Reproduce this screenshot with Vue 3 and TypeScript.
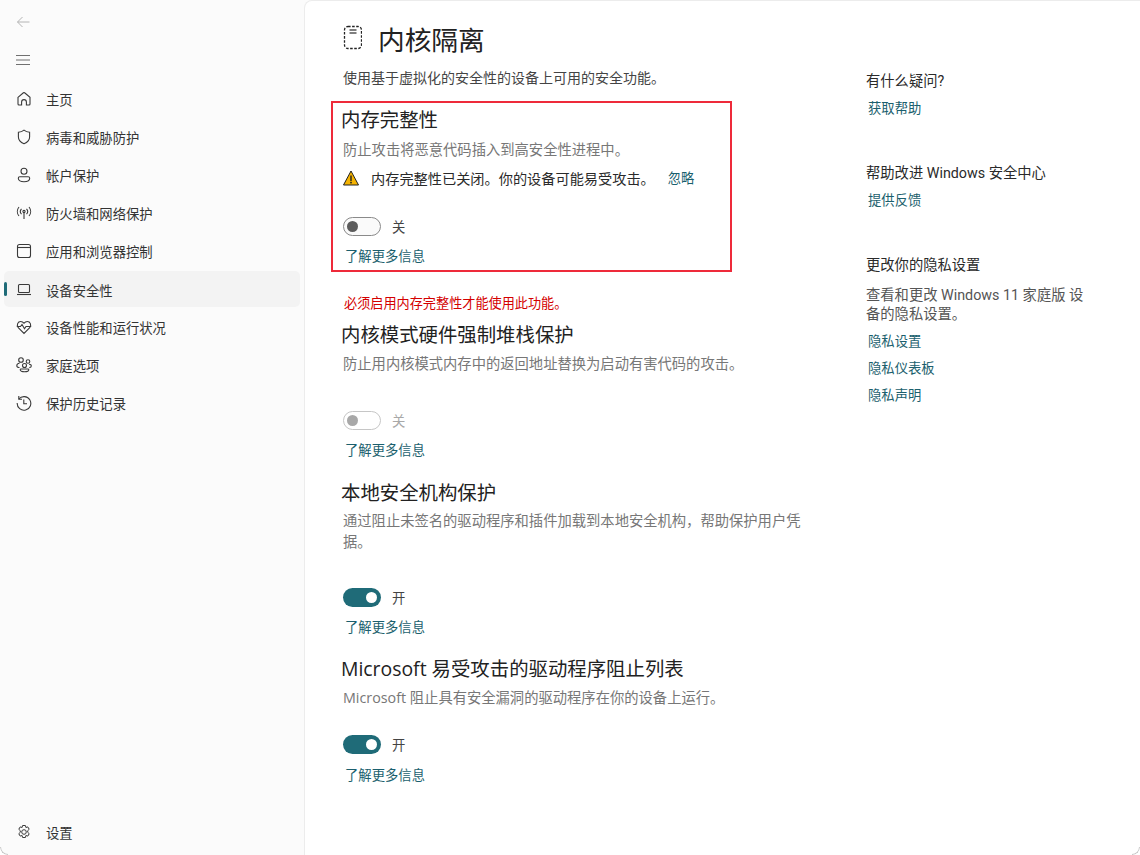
<script setup lang="ts">
interface NavItem { label: string; icon: string; active?: boolean }
const nav: NavItem[] = [
  { label: '主页', icon: 'home' },
  { label: '病毒和威胁防护', icon: 'shield' },
  { label: '帐户保护', icon: 'person' },
  { label: '防火墙和网络保护', icon: 'wifi' },
  { label: '应用和浏览器控制', icon: 'window' },
  { label: '设备安全性', icon: 'laptop', active: true },
  { label: '设备性能和运行状况', icon: 'heart' },
  { label: '家庭选项', icon: 'family' },
  { label: '保护历史记录', icon: 'history' },
]
</script>

<template>
  <div class="app">
    <aside class="side">
      <div class="top-icon back">
        <svg width="16" height="16" viewBox="0 0 16 16" fill="none" stroke="#b4b4b4" stroke-width="1"><path d="M13.500 8H1.500M6.500 3L1.500 8l5 5" /></svg>
      </div>
      <div class="top-icon menu">
        <svg width="16" height="16" viewBox="0 0 16 16" fill="none" stroke="#707070" stroke-width="1"><path d="M0 3.500h14M0 8h14M0 12.500h14" /></svg>
      </div>
      <nav class="nav">
        <div v-for="item in nav" :key="item.label" class="nav-item" :class="{ active: item.active }">
          <span v-if="item.active" class="pill"></span>
          <svg class="nav-icon" width="16" height="16" viewBox="0 0 16 16" fill="none" stroke="#3a3a3a" stroke-width="1.100">
            <template v-if="item.icon === 'home'">
              <path d="M2 6.300L7.400 1.800a1 1 0 0 1 1.200 0L14 6.300V13a1 1 0 0 1-1 1h-2.600v-3a2.400 2.400 0 0 0-4.800 0v3H3a1 1 0 0 1-1-1z" />
            </template>
            <template v-else-if="item.icon === 'shield'">
              <path d="M8 1.200c1.700 1.400 3.500 2 5.600 2.100V8c0 3.200-2 5.300-5.600 6.700C4.400 13.300 2.400 11.200 2.400 8V3.300C4.500 3.200 6.300 2.600 8 1.200z" />
            </template>
            <template v-else-if="item.icon === 'person'">
              <circle cx="8" cy="4.200" r="3" />
              <path d="M3.800 9.800h8.400A1.500 1.500 0 0 1 13.700 11.300c0 2.300-2.400 3.400-5.700 3.400s-5.700-1.100-5.700-3.400a1.500 1.500 0 0 1 1.500-1.500z" />
            </template>
            <template v-else-if="item.icon === 'wifi'">
              <circle cx="8" cy="6.500" r="1.100" />
              <path d="M8 7.600v6.400M5.500 3.800a4 4 0 0 0 0 5.400M10.500 3.800a4 4 0 0 1 0 5.400M3 2a7 7 0 0 0 0 9M13 2a7 7 0 0 1 0 9" />
            </template>
            <template v-else-if="item.icon === 'window'">
              <rect x="1.500" y="1.500" width="13" height="13" rx="2" />
              <path d="M1.500 4.500h13" />
            </template>
            <template v-else-if="item.icon === 'laptop'">
              <rect x="2.500" y="3.500" width="11" height="8" rx="1" />
              <path d="M1 13.500h14" />
            </template>
            <template v-else-if="item.icon === 'heart'">
              <path d="M3 9.500L2.300 8.600C.2 6.200 1.800 2.500 4.700 2.500 6 2.500 7.200 3.200 8 4.300c.8-1.100 2-1.800 3.300-1.800 2.900 0 4.500 3.700 2.400 6.100l-.7.9L8 14.500z" />
              <path d="M.8 7.500h3.700L6 5.500 8.500 9.800 10 7.500h5.200" />
            </template>
            <template v-else-if="item.icon === 'family'">
              <circle cx="5" cy="3" r="2.300" />
              <circle cx="12" cy="4.500" r="1.800" />
              <circle cx="8.500" cy="8.500" r="2" />
              <path d="M3.500 6.200C1.800 6.400.8 7.400.8 8.700c0 1 .9 1.800 2.700 1.800M13 7.200c1.500 0 2.300.7 2.300 1.800 0 1-.7 1.600-2 1.600" />
              <path d="M5 12h7a.8.8 0 0 1 .8.8c0 1.200-1.800 2-4.300 2s-4.300-.8-4.300-2A.8.8 0 0 1 5 12z" />
            </template>
            <template v-else-if="item.icon === 'history'">
              <path d="M2.800 4A6.800 6.800 0 1 1 1.200 8" />
              <path d="M2.800 1v3.200H6M7.800 4.500V8.800H11" />
            </template>
          </svg>
          <span class="nav-label">{{ item.label }}</span>
        </div>
      </nav>
      <div class="settings">
        <svg class="nav-icon" width="16" height="16" viewBox="0 0 16 16" fill="none" stroke="#3a3a3a" stroke-width="1">
          <circle cx="8" cy="8" r="2.300" />
          <path d="M6.600 1.500h2.800l.5 2 1.900-.6 1.400 2.400-1.500 1.400v1.600l1.500 1.400-1.400 2.400-1.900-.6-.5 2H6.600l-.5-2-1.900.6-1.400-2.400 1.500-1.400V6.700L2.800 5.300l1.400-2.400 1.900.6z" />
        </svg>
        <span class="nav-label">设置</span>
      </div>
    </aside>

    <main class="panel">
      <section class="content">
        <header class="title-row">
          <svg class="title-icon" width="20" height="26" viewBox="0 0 20 26" fill="none" stroke="#222" stroke-width="1.300">
            <rect x="2.500" y="1.500" width="17" height="22" rx="3.500" stroke-dasharray="2.600 1.500" />
            <path d="M7.500 5h7M7.500 8h7" stroke="#555" />
          </svg>
          <h1 class="title">内核隔离</h1>
        </header>
        <p class="subtitle">使用基于虚拟化的安全性的设备上可用的安全功能。</p>

        <div class="block boxed">
          <h2>内存完整性</h2>
          <p class="desc">防止攻击将恶意代码插入到高安全性进程中。</p>
          <div class="warn">
            <svg width="16" height="16" viewBox="0 0 16 16">
              <path d="M8 1L15.500 15H.5z" fill="#f5b301" stroke="#222" stroke-width="1" />
              <path d="M8 5.500v5.500" stroke="#222" stroke-width="1.400" />
              <rect x="7.200" y="11.800" width="1.600" height="1.600" fill="#222" />
            </svg>
            <span class="warn-text">内存完整性已关闭。你的设备可能易受攻击。</span>
            <a class="link ignore">忽略</a>
          </div>
          <div class="toggle-row first">
            <span class="toggle off"><i></i></span><span class="state">关</span>
          </div>
          <a class="link more">了解更多信息</a>
        </div>

        <p class="err">必须启用内存完整性才能使用此功能。</p>

        <div class="block stack">
          <h2>内核模式硬件强制堆栈保护</h2>
          <p class="desc">防止用内核模式内存中的返回地址替换为启动有害代码的攻击。</p>
          <div class="toggle-row disabled">
            <span class="toggle off"><i></i></span><span class="state">关</span>
          </div>
          <a class="link more">了解更多信息</a>
        </div>

        <div class="block lsa">
          <h2>本地安全机构保护</h2>
          <p class="desc wrap">通过阻止未签名的驱动程序和插件加载到本地安全机构，帮助保护用户凭据。</p>
          <div class="toggle-row">
            <span class="toggle on"><i></i></span><span class="state">开</span>
          </div>
          <a class="link more">了解更多信息</a>
        </div>

        <div class="block driver">
          <h2>Microsoft 易受攻击的驱动程序阻止列表</h2>
          <p class="desc">Microsoft 阻止具有安全漏洞的驱动程序在你的设备上运行。</p>
          <div class="toggle-row">
            <span class="toggle on"><i></i></span><span class="state">开</span>
          </div>
          <a class="link more">了解更多信息</a>
        </div>
      </section>

      <aside class="help">
        <div class="help-group">
          <h3>有什么疑问?</h3>
          <a class="link">获取帮助</a>
        </div>
        <div class="help-group">
          <h3>帮助改进 Windows 安全中心</h3>
          <a class="link">提供反馈</a>
        </div>
        <div class="help-group">
          <h3>更改你的隐私设置</h3>
          <p class="help-text">查看和更改 Windows 11 家庭版 设备的隐私设置。</p>
          <a class="link">隐私设置</a>
          <a class="link">隐私仪表板</a>
          <a class="link">隐私声明</a>
        </div>
      </aside>
    </main>
    <span class="corner left"></span>
    <span class="corner right"></span>
  </div>
</template>

<style>
html, body { margin: 0; padding: 0; background: #fff; }
</style>

<style scoped>
.app {
  position: relative;
  width: 1140px;
  height: 855px;
  display: flex;
  overflow: hidden;
  background: #fbfbfb;
  color: #1f1f1f;
  font-family: "Open Sans", "Noto Sans CJK SC", sans-serif;
  font-size: 13.33px;
  border-radius: 0 0 8px 8px;
}
.corner {
  position: absolute;
  bottom: 0;
  width: 8px;
  height: 8px;
  box-sizing: border-box;
  border-bottom: 1px solid #c4c4c4;
}
.corner.left { left: 0; border-left: 1px solid #c4c4c4; border-bottom-left-radius: 8px; }
.corner.right { right: 0; border-right: 1px solid #c4c4c4; border-bottom-right-radius: 8px; }
.side {
  width: 304px;
  flex: none;
  display: flex;
  flex-direction: column;
  padding-left: 4px;
  box-sizing: border-box;
}
.top-icon { height: 38px; display: flex; align-items: center; padding-left: 12px; }
.back { margin-top: 3px; }
.nav { margin-top: 2px; display: flex; flex-direction: column; gap: 2px; }
.nav-item {
  position: relative;
  width: 296px;
  height: 36px;
  display: flex;
  align-items: center;
  border-radius: 5px;
}
.nav-item.active { background: #f3f3f3; }
.nav-item.active .nav-label { margin-top: 2px; }
.pill {
  position: absolute;
  left: 0;
  top: 11px;
  width: 3px;
  height: 14px;
  border-radius: 2px;
  background: #1f6b78;
}
.nav-icon { margin-left: 12px; flex: none; }
.nav-label { margin-left: 14px; color: #333; }
.settings { margin-top: auto; height: 44px; display: flex; align-items: center; margin-bottom: 1px; }

.panel {
  flex: 1;
  background: #fff;
  border-left: 1px solid #ececec;
  border-top: 1px solid #ececec;
  border-top-left-radius: 8px;
  display: flex;
  min-width: 0;
}
.content { width: 523px; margin-left: 26px; flex: none; }
.title-row { display: flex; align-items: flex-start; height: 40px; margin-top: 19px; margin-left: 11px; }
.title-icon { flex: none; margin-top: 5px; }
.title { margin: 0 0 0 16px; font-size: 26.7px; font-weight: 400; line-height: 40px; color: #222; }
.subtitle { margin: 8px 0 0 12px; font-size: 14px; line-height: 20px; color: #444; }

.block h2 { margin: 0 0 0 -1px; font-size: 19.4px; font-weight: 400; line-height: 28px; color: #222; }
.boxed {
  margin-top: 13px;
  width: 401px;
  height: 171px;
  box-sizing: border-box;
  border: 2px solid #ee2a3a;
  padding: 3px 0 0 9px;
}
.desc { margin: 5px 0 0 1px; font-size: 14.3px; line-height: 20px; color: #777; }
.boxed .desc { margin-top: 6px; }
.lsa .desc { margin-top: 4px; }
.wrap { width: 470px; line-height: 20.5px; }
.warn { display: flex; align-items: center; margin: 8px 0 0 1px; height: 20px; }
.warn-text { margin-left: 12px; font-size: 14.2px; color: #2a2a2a; }
.ignore { margin-left: 13px; }
.toggle-row { display: flex; align-items: center; height: 20px; margin-top: 28px; margin-left: 1px; }
.toggle {
  position: relative;
  width: 38px;
  height: 19px;
  border-radius: 10px;
  box-sizing: border-box;
  display: block;
  flex: none;
}
.toggle i {
  position: absolute;
  top: 4px;
  width: 11px;
  height: 11px;
  border-radius: 50%;
}
.toggle.off { border: 1px solid #8a8a8a; background: #fafafa; }
.toggle.off i { left: 3px; top: 3px; background: #5c5c5c; }
.toggle.on { background: #1f6b78; }
.toggle.on i { right: 4px; background: #fff; }
.state { margin-left: 11px; font-size: 13.33px; color: #444; }
.disabled .toggle.off { border-color: #c6c6c6; background: #fff; }
.disabled .toggle.off i { background: #a8a8a8; }
.disabled .state { color: #a8a8a8; }
.more { display: block; margin: 10px 0 0 3px; line-height: 20px; }
.link { color: #1b5f6e; text-decoration: none; font-size: 13.33px; line-height: 20px; }
.err { margin: 21px 0 0 13px; color: #d40000; font-size: 13.15px; line-height: 20px; }
.stack { margin: 8px 0 0 11px; }
.stack .toggle-row { margin-top: 36px; }
.lsa { margin: 19px 0 0 11px; }
.lsa .toggle-row { margin-top: 35px; }
.driver { margin: 18px 0 0 11px; }
.driver .toggle-row { margin-top: 26px; }
.driver .more { margin-top: 11px; }

.help { margin-left: 12px; width: 224px; padding-top: 70px; font-family: Roboto, "Noto Sans CJK SC", sans-serif; }
.help-group { margin-bottom: 44.5px; }
.help-group:first-child { margin-bottom: 43.5px; }
.help-group:first-child h3, .help-group:nth-child(2) h3 { margin-bottom: 8px; }
.help-group h3 { margin: 0 0 7px; font-size: 14.3px; font-weight: 400; line-height: 20px; color: #2a2a2a; }
.help-group .link { display: block; margin: 0 0 7px 2px; }
.help-text { margin: 11px 0 8px; font-size: 14.3px; line-height: 19px; color: #555; width: 222px; }
</style>
